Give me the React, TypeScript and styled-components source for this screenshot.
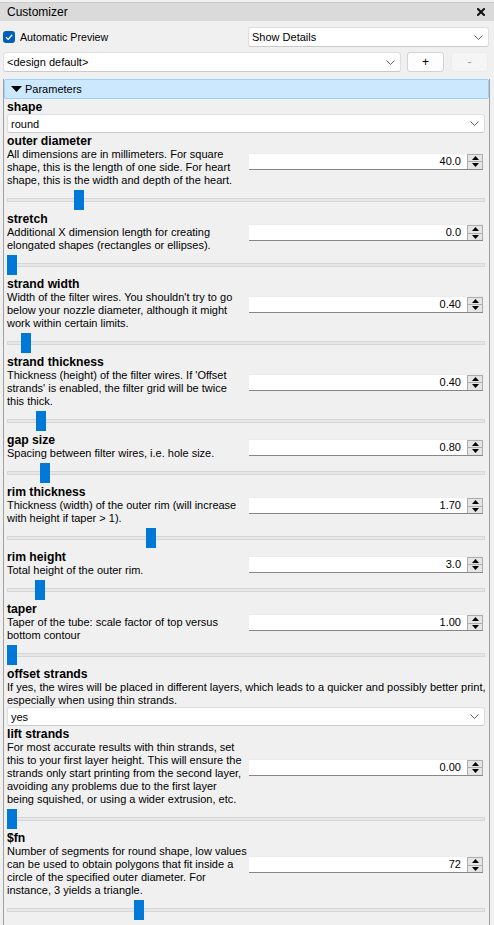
import styled, { createGlobalStyle } from 'styled-components'

const GlobalStyle = createGlobalStyle`
  html, body {
    margin: 0;
    padding: 0;
    background: #f0f0f0;
  }
  body {
    font-family: "Liberation Sans", Arial, sans-serif;
    font-size: 10.67px;
    color: #000;
  }
`

type ComboParam = { kind: 'combo'; name: string; value: string; desc?: string[] }
type NumberParam = { kind: 'number'; name: string; value: string; desc: string[]; pos: number }
type Param = ComboParam | NumberParam

// pos = handle offset along the groove, 0..468
const params: Param[] = [
    { kind: 'combo', name: 'shape', value: 'round' },
    {
        kind: 'number', name: 'outer diameter', value: '40.0', pos: 67,
        desc: [
            'All dimensions are in millimeters. For square',
            'shape, this is the length of one side. For heart',
            'shape, this is the width and depth of the heart.',
        ],
    },
    {
        kind: 'number', name: 'stretch', value: '0.0', pos: 0,
        desc: [
            'Additional X dimension length for creating',
            'elongated shapes (rectangles or ellipses).',
        ],
    },
    {
        kind: 'number', name: 'strand width', value: '0.40', pos: 14,
        desc: [
            "Width of the filter wires. You shouldn't try to go",
            'below your nozzle diameter, although it might',
            'work within certain limits.',
        ],
    },
    {
        kind: 'number', name: 'strand thickness', value: '0.40', pos: 29,
        desc: [
            "Thickness (height) of the filter wires. If 'Offset",
            "strands' is enabled, the filter grid will be twice",
            'this thick.',
        ],
    },
    {
        kind: 'number', name: 'gap size', value: '0.80', pos: 33,
        desc: ['Spacing between filter wires, i.e. hole size.'],
    },
    {
        kind: 'number', name: 'rim thickness', value: '1.70', pos: 139,
        desc: [
            'Thickness (width) of the outer rim (will increase',
            'with height if taper > 1).',
        ],
    },
    {
        kind: 'number', name: 'rim height', value: '3.0', pos: 28,
        desc: ['Total height of the outer rim.'],
    },
    {
        kind: 'number', name: 'taper', value: '1.00', pos: 0,
        desc: ['Taper of the tube: scale factor of top versus', 'bottom contour'],
    },
    {
        kind: 'combo', name: 'offset strands', value: 'yes',
        desc: [
            'If yes, the wires will be placed in different layers, which leads to a quicker and possibly better print,',
            'especially when using thin strands.',
        ],
    },
    {
        kind: 'number', name: 'lift strands', value: '0.00', pos: 0,
        desc: [
            'For most accurate results with thin strands, set',
            'this to your first layer height. This will ensure the',
            'strands only start printing from the second layer,',
            'avoiding any problems due to the first layer',
            'being squished, or using a wider extrusion, etc.',
        ],
    },
    {
        kind: 'number', name: '$fn', value: '72', pos: 127,
        desc: [
            'Number of segments for round shape, low values',
            'can be used to obtain polygons that fit inside a',
            'circle of the specified outer diameter. For',
            'instance, 3 yields a triangle.',
        ],
    },
]

function Chevron() {
    return (
        <ChevronIcon width='9' height='5' viewBox='0 0 9 5'>
            <polyline points='0.5,0.5 4.5,4.5 8.5,0.5' fill='none' stroke='#5f5f5f' strokeWidth='1' />
        </ChevronIcon>
    )
}

function ComboBox({ value, height }: { value: string; height: number }) {
    return (
        <Combo $h={height}>
            <span>{value}</span>
            <Chevron />
        </Combo>
    )
}

function Desc({ lines }: { lines: string[] }) {
    return (
        <ParamDesc>
            {lines.map((l, i) => <div key={i}>{l}</div>)}
        </ParamDesc>
    )
}

function ParamBlock({ p }: { p: Param }) {
    if (p.kind === 'combo') {
        return (
            <Block>
                <ParamName>{p.name}</ParamName>
                {p.desc && <Desc lines={p.desc} />}
                <ComboGap>
                    <ComboBox value={p.value} height={19} />
                </ComboGap>
            </Block>
        )
    }
    return (
        <Block>
            <ParamRow>
                <div>
                    <ParamName>{p.name}</ParamName>
                    <Desc lines={p.desc} />
                </div>
                <SpinBox>
                    <SpinValue>{p.value}</SpinValue>
                    <SpinButtons>
                        <SpinHalf>
                            <svg width='7' height='4' viewBox='0 0 7 4'><polygon points='0,4 3.5,0 7,4' fill='#000' /></svg>
                        </SpinHalf>
                        <SpinHalf $bottom>
                            <svg width='7' height='4' viewBox='0 0 7 4'><polygon points='0,0 3.5,4 7,0' fill='#000' /></svg>
                        </SpinHalf>
                    </SpinButtons>
                </SpinBox>
            </ParamRow>
            <Slider>
                <Groove />
                <Handle style={{ left: p.pos }} />
            </Slider>
        </Block>
    )
}

export default function App() {
    return (
        <>
            <GlobalStyle />
            <Window>
                <TitleBar>
                    <span>Customizer</span>
                    <svg width='8' height='8' viewBox='0 0 8 8'>
                        <path d='M1 1 L7 7 M7 1 L1 7' stroke='#111' strokeWidth='2' strokeLinecap='square' />
                    </svg>
                </TitleBar>
                <Toolbar>
                    <CheckLabel>
                        <CheckBox>
                            <svg width='10' height='10' viewBox='0 0 10 10'>
                                <polyline points='2,5.2 4.2,7.4 8.2,2.8' fill='none' stroke='#fff' strokeWidth='1.3' />
                            </svg>
                        </CheckBox>
                        Automatic Preview
                    </CheckLabel>
                    <ComboBox value='Show Details' height={20} />
                </Toolbar>
                <PresetRow>
                    <PresetCombo>
                        <ComboBox value='<design default>' height={20} />
                    </PresetCombo>
                    <PushButton>+</PushButton>
                    <PushButton $disabled>-</PushButton>
                </PresetRow>
                <Panel>
                    <GroupHeader>
                        <svg width='11' height='6' viewBox='0 0 11 6'><polygon points='0,0 11,0 5.5,6' fill='#000' /></svg>
                        Parameters
                    </GroupHeader>
                    <ParamList>
                        {params.map(p => <ParamBlock key={p.name} p={p} />)}
                    </ParamList>
                </Panel>
            </Window>
        </>
    )
}

const Window = styled.div`
    width: 494px;
    height: 925px;
    display: flex;
    flex-direction: column;
    overflow: hidden;
    background: #f0f0f0;
`

const TitleBar = styled.div`
    margin-top: 2px;
    height: 18px;
    border-top: 1px solid #cdcdcd;
    background: #dadada;
    display: flex;
    align-items: center;
    justify-content: space-between;
    padding: 0 9px 0 7px;
    font-size: 12px;
`

const Toolbar = styled.div`
    margin-top: 6px;
    padding: 0 5px 0 3px;
    display: grid;
    grid-template-columns: 242px 241px;
    column-gap: 3px;
    align-items: center;
`

const CheckLabel = styled.label`
    display: flex;
    align-items: center;
    gap: 5px;
`

const CheckBox = styled.span`
    width: 12px;
    height: 12px;
    border-radius: 3px;
    background: #005fb8;
    display: flex;
    align-items: center;
    justify-content: center;
`

const Combo = styled.div<{ $h: number }>`
    box-sizing: border-box;
    height: ${p => p.$h}px;
    background: #fff;
    border: 1px solid #dedede;
    border-bottom-color: #cacaca;
    border-radius: 3px;
    display: flex;
    align-items: center;
    justify-content: space-between;
    padding: 0 5px 0 3px;
    white-space: nowrap;
    font-size: 11px;
`

const ChevronIcon = styled.svg`
    flex: none;
`

const PresetRow = styled.div`
    margin-top: 5px;
    padding: 0 6px 0 3px;
    display: flex;
    gap: 6px;
`

const PresetCombo = styled.div`
    width: 398px;
`

const PushButton = styled.div<{ $disabled?: boolean }>`
    box-sizing: border-box;
    width: 37px;
    height: 20px;
    border-radius: 3px;
    border: 1px solid ${p => (p.$disabled ? '#ececec' : '#d2d2d2')};
    background: ${p => (p.$disabled ? '#f5f5f5' : '#fdfdfd')};
    color: ${p => (p.$disabled ? '#9a9a9a' : '#000')};
    display: flex;
    align-items: center;
    justify-content: center;
    font-size: 12px;
    & + & {
        margin-left: 1px;
    }
`

const Panel = styled.div`
    margin: 7px 4px 0 3px;
    flex: 1;
    border-left: 1px solid #a0a0a0;
    border-right: 1px solid #a0a0a0;
    display: flex;
    flex-direction: column;
`

const GroupHeader = styled.div`
    box-sizing: border-box;
    height: 20px;
    background: #cce8ff;
    border: 1px solid #99d1ff;
    border-radius: 2px;
    display: flex;
    align-items: center;
    gap: 3px;
    padding-left: 6px;
    font-size: 11px;
`

const ParamList = styled.div`
    padding: 2px 4px 0 3px;
`

const Block = styled.div``

const ParamName = styled.div`
    font-weight: bold;
    font-size: 12.2px;
    line-height: 13px;
    height: 13px;
`

const ParamDesc = styled.div`
    font-size: 11px;
    line-height: 13px;
    white-space: nowrap;
`

const ComboGap = styled.div`
    padding-bottom: 2px;
`

const ParamRow = styled.div`
    display: grid;
    grid-template-columns: 242px 234px;
    align-items: center;
`

const SpinBox = styled.div`
    box-sizing: border-box;
    height: 17px;
    background: #fff;
    border-top: 1px solid #ececec;
    border-bottom: 1px solid #868686;
    display: flex;
    align-items: stretch;
`

const SpinValue = styled.div`
    flex: 1;
    text-align: right;
    padding-right: 6px;
    line-height: 15px;
    font-size: 11px;
`

const SpinButtons = styled.div`
    width: 14px;
    display: flex;
    flex-direction: column;
    border: 1px solid #adadad;
    border-bottom: none;
    background: #e5e5e5;
`

const SpinHalf = styled.div<{ $bottom?: boolean }>`
    flex: 1;
    display: flex;
    align-items: center;
    justify-content: center;
    border-top: ${p => (p.$bottom ? '1px solid #adadad' : 'none')};
`

const Slider = styled.div`
    position: relative;
    height: 26px;
`

const Groove = styled.div`
    position: absolute;
    left: 0;
    right: 0;
    top: 11px;
    height: 4px;
    box-sizing: border-box;
    background: #e7e7e7;
    border: 1px solid #d6d6d6;
`

const Handle = styled.div`
    position: absolute;
    top: 3px;
    width: 10px;
    height: 20px;
    background: #0078d7;
`
